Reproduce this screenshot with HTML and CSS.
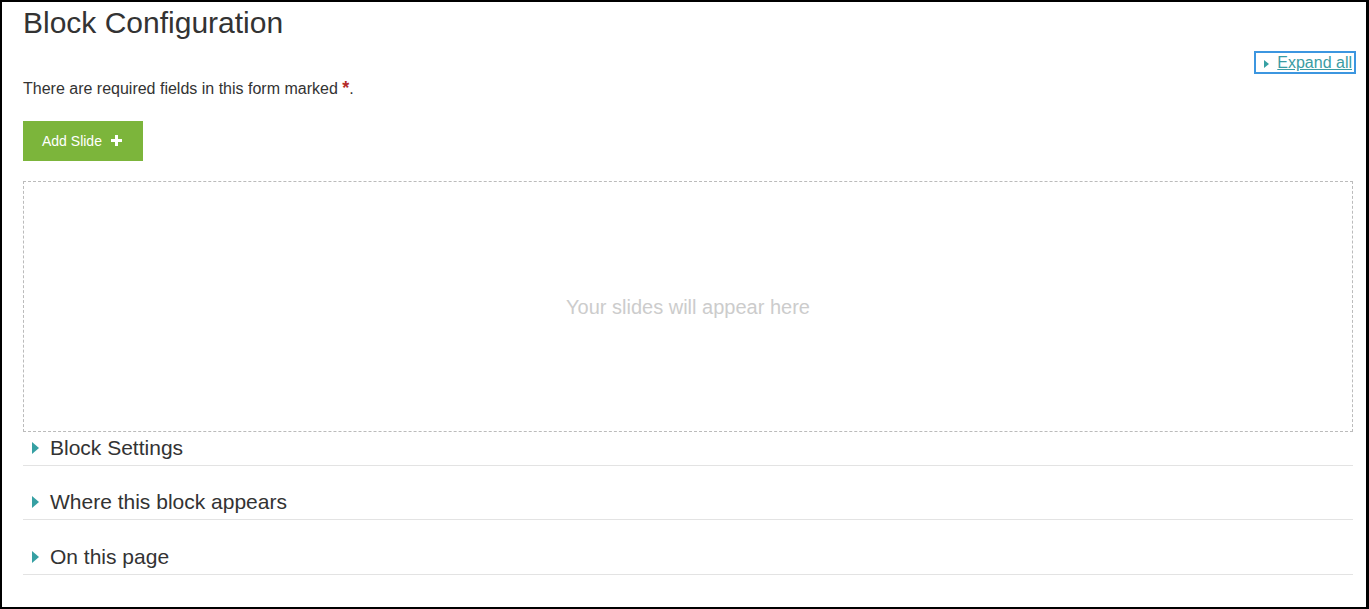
FILE: index.html
```html
<!DOCTYPE html>
<html>
<head>
<meta charset="utf-8">
<link rel="stylesheet" href="styles.css">
</head>
<body>
<div class="frame">
  <h2 class="title">Block Configuration</h2>
  <div class="expand-row">
    <a class="expand-all" href="#"><span class="tri small"></span><span class="expand-text">Expand all</span></a>
  </div>
  <p class="required">There are required fields in this form marked <span class="star">*</span>.</p>
  <button class="add-slide">Add Slide <svg class="plus" width="11" height="11" viewBox="0 0 11 11"><path d="M4 0h3v4h4v3H7v4H4V7H0V4h4z" fill="#fff"/></svg></button>
  <div class="dropzone">Your slides will appear here</div>
  <div class="section"><span class="tri"></span>Block Settings</div>
  <div class="section"><span class="tri"></span>Where this block appears</div>
  <div class="section last"><span class="tri"></span>On this page</div>
</div>
</body>
</html>
```
FILE: styles.css
```css
html, body {
  margin: 0;
  padding: 0;
  background: #fff;
}
body {
  font-family: "Liberation Sans", Arial, sans-serif;
  color: #333;
}
.frame {
  box-sizing: border-box;
  width: 1369px;
  height: 609px;
  border: 2px solid #000;
  border-right-width: 3px;
  padding: 0 13px 0 21px;
  overflow: hidden;
}
.title {
  margin: 0;
  padding-top: 4px;
  font-size: 30px;
  font-weight: normal;
  line-height: 34px;
  color: #333;
}
.expand-row {
  display: flex;
  justify-content: flex-end;
  margin-top: 11px;
  margin-right: -3px;
}
.expand-all {
  display: flex;
  align-items: center;
  gap: 8px;
  height: 23px;
  box-sizing: border-box;
  padding: 0 2px 0 8px;
  border: 2px solid #3c96e0;
  color: #3a9ca3;
  font-size: 16px;
  text-decoration: underline;
}
.expand-text {
  line-height: 18px;
}
.tri {
  display: inline-block;
  width: 0;
  height: 0;
  border-top: 6px solid transparent;
  border-bottom: 6px solid transparent;
  border-left: 7px solid #36a0a3;
  margin-left: -1px;
}
.tri.small {
  border-top-width: 4px;
  border-bottom-width: 4px;
  border-left-width: 5px;
  margin-top: 2px;
  margin-left: 0;
}
.required {
  margin: 3px 0 0;
  font-size: 16px;
  line-height: 24px;
  color: #333;
}
.star {
  color: #b52b27;
  font-weight: bold;
  font-size: 18px;
  line-height: 16px;
}
.add-slide {
  display: flex;
  align-items: center;
  gap: 9px;
  margin-top: 20px;
  width: 120px;
  height: 40px;
  padding: 0 0 0 19px;
  border: none;
  background: #7cb53b;
  color: #fff;
  font-family: "Liberation Sans", Arial, sans-serif;
  font-size: 14px;
}
.plus {
  margin-top: -1px;
}
.dropzone {
  box-sizing: border-box;
  margin-top: 20px;
  height: 251px;
  border: 1px dashed #bbb;
  display: flex;
  align-items: center;
  justify-content: center;
  color: #ccc;
  font-size: 20px;
  padding-top: 1px;
}
.section {
  display: flex;
  align-items: center;
  gap: 11px;
  box-sizing: border-box;
  height: 34px;
  padding-left: 10px;
  padding-bottom: 2px;
  border-bottom: 1px solid #e3e3e3;
  font-size: 21px;
  color: #333;
}
.section + .section {
  margin-top: 20px;
}
.section.last {
  margin-top: 21px;
}
```
